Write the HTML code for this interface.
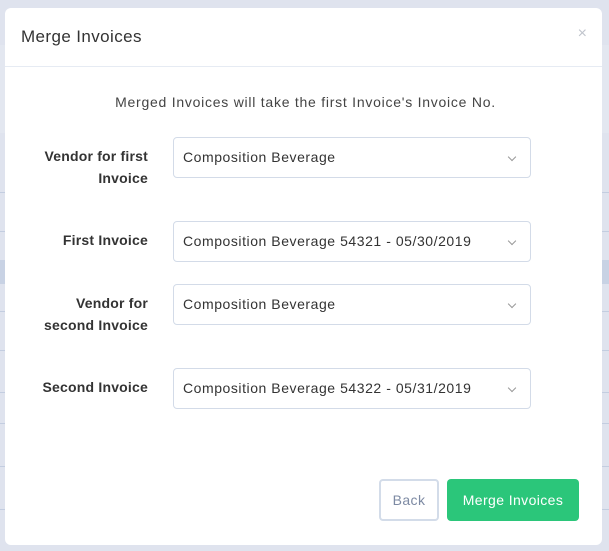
<!DOCTYPE html>
<html><head><meta charset="utf-8"><style>
*{box-sizing:border-box;margin:0;padding:0}
body{width:609px;height:551px;overflow:hidden;background:#dfe3ee;font-family:"Liberation Sans",sans-serif;position:relative}
.bgrow{position:absolute;left:0;right:0;height:1px;background:#c3cde0}
.modal{position:absolute;left:5px;top:8px;width:597px;height:537px;background:#fff;border-radius:6px}
.hdr{height:59px;border-bottom:1px solid #e6ebf3;position:relative}
.hdr h1{position:absolute;left:16px;top:19px;font-size:17px;font-weight:normal;color:#333;letter-spacing:0.4px}
.x{position:absolute;right:15px;top:17px;color:#c0c4cc;font-size:16px}
.note{position:absolute;top:86px;left:0;right:0;text-align:center;padding-left:4px;font-size:14px;color:#444;letter-spacing:0.75px}
.lbl{position:absolute;right:454px;text-align:right;font-size:14px;font-weight:bold;color:#333;line-height:22px;letter-spacing:0.2px}
.sel{position:absolute;left:168px;width:358px;height:41px;border:1px solid #d3dbe8;border-radius:4px;font-size:14px;color:#333;padding:11px 0 0 9px;letter-spacing:0.55px}
.sel:after{content:"";position:absolute;right:15px;top:16px;width:5px;height:5px;border-right:1px solid #999;border-bottom:1px solid #999;transform:rotate(45deg)}
.back{position:absolute;left:374px;top:471px;width:60px;height:42px;border:2px solid #d3dce9;border-radius:4px;color:#7d8aa3;font-size:14px;text-align:center;line-height:38px;letter-spacing:0.4px}
.go{position:absolute;left:442px;top:471px;width:132px;height:42px;background:#2bc67a;border-radius:4px;color:#fff;font-size:14px;text-align:center;line-height:42px;letter-spacing:0.4px}
</style></head><body>
<div class="bgrow" style="top:45px;height:88px;background:#e3e7f0"></div>
<div class="bgrow" style="top:192px"></div>
<div class="bgrow" style="top:231px"></div>
<div style="position:absolute;left:0;right:0;top:260px;height:24px;background:#c8d2e4"></div>
<div class="bgrow" style="top:311px"></div>
<div class="bgrow" style="top:350px"></div>
<div class="bgrow" style="top:392px"></div>
<div class="bgrow" style="top:423px"></div>
<div class="bgrow" style="top:466px"></div>
<div class="bgrow" style="top:509px"></div>
<div class="modal">
<div class="hdr"><h1>Merge Invoices</h1><span class="x">×</span></div>
<div class="note">Merged Invoices will take the first Invoice's Invoice No.</div>
<div class="lbl" style="top:137px">Vendor for first<br>Invoice</div>
<div class="sel" style="top:129px">Composition Beverage</div>
<div class="lbl" style="top:221px">First Invoice</div>
<div class="sel" style="top:213px">Composition Beverage 54321 - 05/30/2019</div>
<div class="lbl" style="top:284px">Vendor for<br>second Invoice</div>
<div class="sel" style="top:276px">Composition Beverage</div>
<div class="lbl" style="top:368px">Second Invoice</div>
<div class="sel" style="top:360px">Composition Beverage 54322 - 05/31/2019</div>
<div class="back">Back</div>
<div class="go">Merge Invoices</div>
</div>
</body></html>
